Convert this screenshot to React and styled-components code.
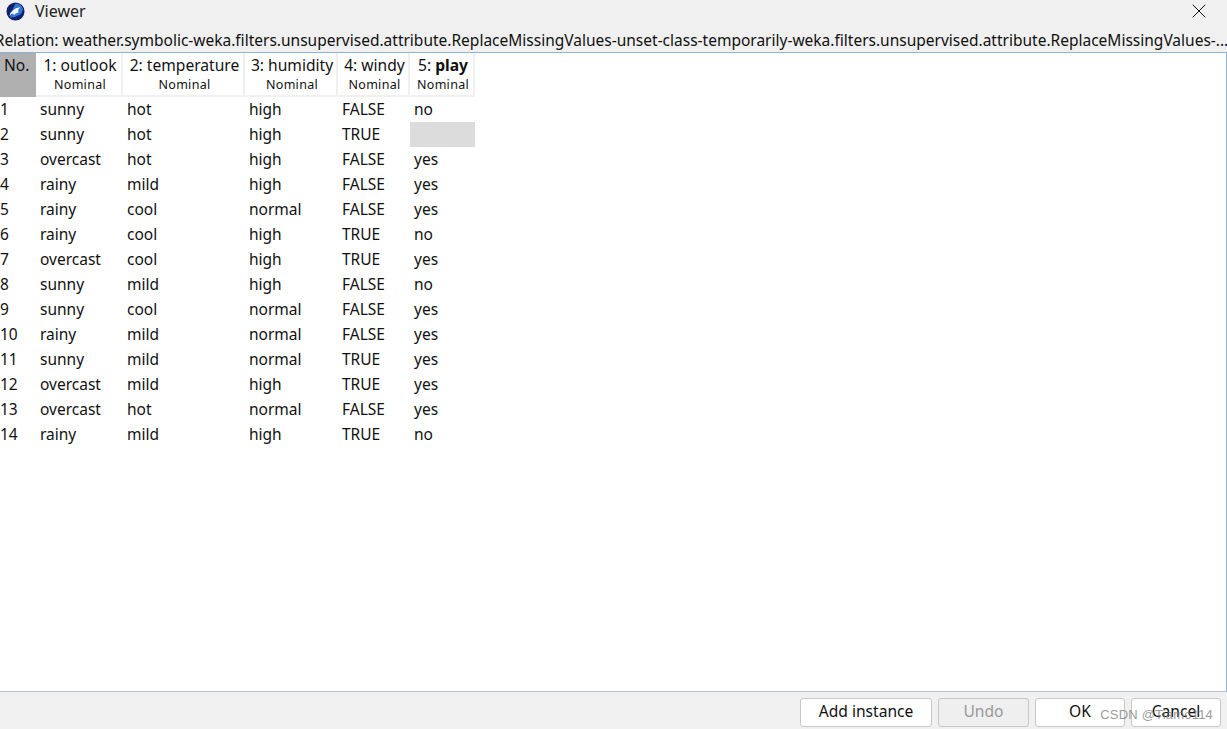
import React from 'react';
import styled, { createGlobalStyle } from 'styled-components';
import { X } from 'lucide-react';

const columns = [
  { label: '1: outlook', width: 87 },
  { label: '2: temperature', width: 122 },
  { label: '3: humidity', width: 93 },
  { label: '4: windy', width: 72 },
  { label: '5: ', strong: 'play', width: 65 },
];

const rows = [
  ['sunny', 'hot', 'high', 'FALSE', 'no'],
  ['sunny', 'hot', 'high', 'TRUE', ''],
  ['overcast', 'hot', 'high', 'FALSE', 'yes'],
  ['rainy', 'mild', 'high', 'FALSE', 'yes'],
  ['rainy', 'cool', 'normal', 'FALSE', 'yes'],
  ['rainy', 'cool', 'high', 'TRUE', 'no'],
  ['overcast', 'cool', 'high', 'TRUE', 'yes'],
  ['sunny', 'mild', 'high', 'FALSE', 'no'],
  ['sunny', 'cool', 'normal', 'FALSE', 'yes'],
  ['rainy', 'mild', 'normal', 'FALSE', 'yes'],
  ['sunny', 'mild', 'normal', 'TRUE', 'yes'],
  ['overcast', 'mild', 'high', 'TRUE', 'yes'],
  ['overcast', 'hot', 'normal', 'FALSE', 'yes'],
  ['rainy', 'mild', 'high', 'TRUE', 'no'],
];

const App = () => {
  return (
    <>
      <GlobalStyle />
      <Window>
        <TitleBar>
          <TitleGroup>
            <svg width="19" height="19" viewBox="0 0 20 20">
              <circle cx="10" cy="10" r="9.5" fill="#14206e" />
              <path d="M10 1.5a8.5 8.5 0 0 1 8 6l-2 5-6 3-5 1-1-4 3-5z" fill="#2f78d2" />
              <path d="M3.5 15l1.5-4 3-2.500 2.500-2 4.500-1-2 2.500 0 3-3 1-1.500 2-1-2-2 .5z" fill="#fff" />
            </svg>
            <WindowName>Viewer</WindowName>
          </TitleGroup>
          <CloseButton><X size={24} strokeWidth={1} /></CloseButton>
        </TitleBar>
        <Relation>
          <span>Relation: weather.symbolic-weka.filters.unsupervised.attribute.ReplaceMissingValues-unset-class-temporarily-weka.filters.unsupervised.attribute.ReplaceMissingValues-...</span>
        </Relation>
        <TablePane>
          <Table>
            <colgroup>
              <col style={{ width: 36 }} />
              {columns.map((c) => <col key={c.label} style={{ width: c.width }} />)}
            </colgroup>
            <thead>
              <tr>
                <NoHead>No.</NoHead>
                {columns.map((c) => (
                  <Head key={c.label}>
                    <HeadName>{c.label}{c.strong && <b>{c.strong}</b>}</HeadName>
                    <HeadType>Nominal</HeadType>
                  </Head>
                ))}
              </tr>
            </thead>
            <tbody>
              {rows.map((row, i) => (
                <tr key={i}>
                  <Index>{i + 1}</Index>
                  {row.map((value, j) => (
                    <Cell key={j} $missing={value === ''}>{value}</Cell>
                  ))}
                </tr>
              ))}
            </tbody>
          </Table>
        </TablePane>
        <Footer>
          <Button $width={132}>Add instance</Button>
          <Button $width={91} disabled>Undo</Button>
          <Button>OK</Button>
          <Button>Cancel</Button>
        </Footer>
        <Watermark>CSDN @Tiamo114</Watermark>
      </Window>
    </>
  );
};

const GlobalStyle = createGlobalStyle`
  html, body {
    margin: 0;
    padding: 0;
    background: #f0f0f0;
  }
  body {
    font-family: "Noto Sans", "Open Sans", sans-serif;
    color: #111;
  }
`;

const Window = styled.div`
  position: relative;
  width: 1227px;
  height: 729px;
  display: flex;
  flex-direction: column;
  background: #f0f0f0;
  overflow: hidden;
`;

const TitleBar = styled.div`
  height: 22px;
  display: flex;
  align-items: center;
  justify-content: space-between;
  padding: 0 16px 0 6px;
`;

const TitleGroup = styled.div`
  display: flex;
  align-items: center;
  gap: 10px;
`;

const WindowName = styled.span`
  font-size: 16px;
  color: #222;
`;

const CloseButton = styled.div`
  display: flex;
  color: #111;
`;

const Relation = styled.div`
  height: 30px;
  box-sizing: border-box;
  padding: 6px 4px 0 0;
  display: flex;
  align-items: center;
  justify-content: center;
  white-space: nowrap;
  font-size: 15.5px;
  overflow: hidden;
`;

const TablePane = styled.div`
  flex: 1;
  background: #fff;
  border: 1px solid #8fb4dc;
  border-left: 0;
  border-bottom-color: #b9c4d0;
`;

const Table = styled.table`
  border-collapse: separate;
  border-spacing: 0;
  table-layout: fixed;
  width: 475px;
  font-size: 15.5px;
`;

const NoHead = styled.th`
  box-sizing: border-box;
  height: 44px;
  padding: 0 0 20px 4px;
  background: #b0b0b0;
  font-weight: 400;
  font-size: 15.5px;
  text-align: left;
`;

const Head = styled.th`
  box-sizing: border-box;
  height: 44px;
  padding: 1px 0 0 3px;
  font-weight: 400;
  text-align: center;
  vertical-align: top;
  border-right: 2px solid #f0f0f0;
  border-bottom: 2px solid #f0f0f0;
  white-space: nowrap;
`;

const HeadName = styled.div`
  font-size: 15.6px;
  line-height: 22px;
`;

const HeadType = styled.div`
  font-size: 12.5px;
  line-height: 17px;
  letter-spacing: 0.3px;
`;

const Index = styled.td`
  height: 25px;
  padding: 0;
  line-height: 25px;
`;

const Cell = styled.td`
  height: 25px;
  padding: 0 0 0 4px;
  line-height: 25px;
  background: ${(props) => (props.$missing ? '#dcdcdc' : 'transparent')};
`;

const Footer = styled.div`
  height: 37px;
  box-sizing: border-box;
  display: flex;
  justify-content: flex-end;
  align-items: flex-start;
  gap: 6px;
  padding: 6px 6px 0 0;
`;

const Button = styled.button`
  width: ${(props) => props.$width || 90}px;
  height: 29px;
  padding: 0 0 4px;
  font-family: inherit;
  font-size: 15.6px;
  color: #111;
  background: #fff;
  border: 1px solid #c8c8c8;
  border-radius: 3px;

  &:disabled {
    color: #999;
    background: #efefef;
  }
`;

const Watermark = styled.div`
  position: absolute;
  right: 14px;
  bottom: 7px;
  font-family: "Liberation Sans", sans-serif;
  font-size: 13px;
  color: rgba(120, 120, 120, 0.75);
  letter-spacing: 0.2px;
`;

export default App;
